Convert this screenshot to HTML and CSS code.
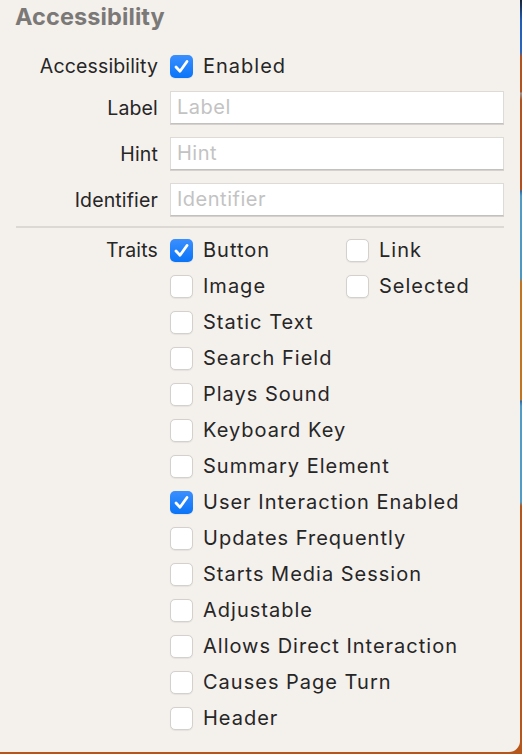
FILE: index.html
```html
<!DOCTYPE html>
<html>
<head>
<meta charset="utf-8">
<link rel="stylesheet" href="styles.css">
</head>
<body>
<div class="panel">
  <h1 class="title">Accessibility</h1>
  <div class="form">
    <div class="row row-check">
      <span class="label">Accessibility</span>
      <label class="check"><span class="box on"><svg viewBox="0 0 23 23"><path d="M6 12 L10 16.2 L17 6.5" /></svg></span>Enabled</label>
    </div>
    <div class="row row-input">
      <span class="label">Label</span>
      <div class="input">Label</div>
    </div>
    <div class="row row-input">
      <span class="label">Hint</span>
      <div class="input">Hint</div>
    </div>
    <div class="row row-input">
      <span class="label">Identifier</span>
      <div class="input">Identifier</div>
    </div>
  </div>
  <div class="sep"></div>
  <div class="form traits-form">
    <span class="label traits-label">Traits</span>
    <div class="traits">
      <label class="check"><span class="box on"><svg viewBox="0 0 23 23"><path d="M6 12 L10 16.2 L17 6.5" /></svg></span>Button</label>
      <label class="check"><span class="box"></span>Link</label>
      <label class="check"><span class="box"></span>Image</label>
      <label class="check"><span class="box"></span>Selected</label>
      <label class="check full"><span class="box"></span>Static Text</label>
      <label class="check full"><span class="box"></span>Search Field</label>
      <label class="check full"><span class="box"></span>Plays Sound</label>
      <label class="check full"><span class="box"></span>Keyboard Key</label>
      <label class="check full"><span class="box"></span>Summary Element</label>
      <label class="check full"><span class="box on"><svg viewBox="0 0 23 23"><path d="M6 12 L10 16.2 L17 6.5" /></svg></span>User Interaction Enabled</label>
      <label class="check full"><span class="box"></span>Updates Frequently</label>
      <label class="check full"><span class="box"></span>Starts Media Session</label>
      <label class="check full"><span class="box"></span>Adjustable</label>
      <label class="check full"><span class="box"></span>Allows Direct Interaction</label>
      <label class="check full"><span class="box"></span>Causes Page Turn</label>
      <label class="check full"><span class="box"></span>Header</label>
    </div>
  </div>
</div>
</body>
</html>
```
FILE: styles.css
```css
html, body {
  margin: 0;
  padding: 0;
  height: 100%;
}
body {
  width: 522px;
  height: 754px;
  overflow: hidden;
  background: linear-gradient(to bottom,
    #16233a 0px, #1f5cb8 20px, #2a66c0 52px, #b4521e 57px,
    #b4521e 92px, #9a9a9a 93px, #b4521e 100px, #b34f1d 190px,
    #2a6cb0 191px, #4f9cc6 196px, #4a97c2 278px, #c2741f 282px,
    #c2741f 400px, #2a6cb0 401px, #4f9cc6 406px, #4f9cc6 502px,
    #b7561b 506px, #b7561b 754px);
  font-family: Inter, "Noto Sans", sans-serif;
  color: #262626;
}
.panel {
  width: 520px;
  height: 752px;
  background: #f4f0ec;
  border-bottom-right-radius: 11px;
  box-sizing: border-box;
}
.title {
  margin: 0;
  padding-left: 15px;
  font-size: 23.5px;
  font-weight: 700;
  line-height: 34px;
  color: #7b7977;
  letter-spacing: 0.1px;
}
.form {
  display: flex;
  flex-direction: column;
  gap: 13px;
  padding-right: 16px;
}
.row {
  display: grid;
  grid-template-columns: 158px 1fr;
  column-gap: 12px;
  align-items: center;
}
.row-check {
  height: 24px;
  margin-top: 20px;
}
.label {
  text-align: right;
  font-size: 19.5px;
  letter-spacing: 0.15px;
  line-height: 24px;
  color: #262626;
  white-space: nowrap;
}
.input {
  height: 33px;
  box-sizing: border-box;
  background: #ffffff;
  border: 1px solid #dedad6;
  border-bottom-color: #c3c0bd;
  box-shadow: 0 1px 0 #d4d1ce;
  padding-left: 6px;
  font-size: 20px;
  letter-spacing: 0.5px;
  line-height: 31px;
  color: #c3c3c3;
}
.check {
  display: flex;
  align-items: center;
  gap: 10px;
  font-size: 20px;
  letter-spacing: 1px;
  line-height: 24px;
  height: 24px;
  color: #262626;
  white-space: nowrap;
}
.box {
  width: 23px;
  height: 23px;
  box-sizing: border-box;
  border-radius: 5px;
  background: #ffffff;
  border: 1px solid #d3d0cd;
  box-shadow: 0 0.5px 1px rgba(0,0,0,0.06);
  flex: none;
  display: flex;
}
.box.on {
  border: none;
  background: linear-gradient(to bottom, #3b8ffe, #0a74f8);
}
.box svg {
  width: 23px;
  height: 23px;
}
.box svg path {
  fill: none;
  stroke: #ffffff;
  stroke-width: 2.8;
  stroke-linecap: round;
  stroke-linejoin: round;
}
.sep {
  height: 2px;
  background: #dcd8d4;
  margin: 10px 16px 0 16px;
}
.traits-form {
  display: grid;
  grid-template-columns: 158px 1fr;
  column-gap: 12px;
  padding-top: 10px;
}
.traits-label {
  align-self: start;
}
.traits {
  display: grid;
  grid-template-columns: 176px 1fr;
  row-gap: 12px;
}
.full {
  grid-column: 1 / -1;
}
```
